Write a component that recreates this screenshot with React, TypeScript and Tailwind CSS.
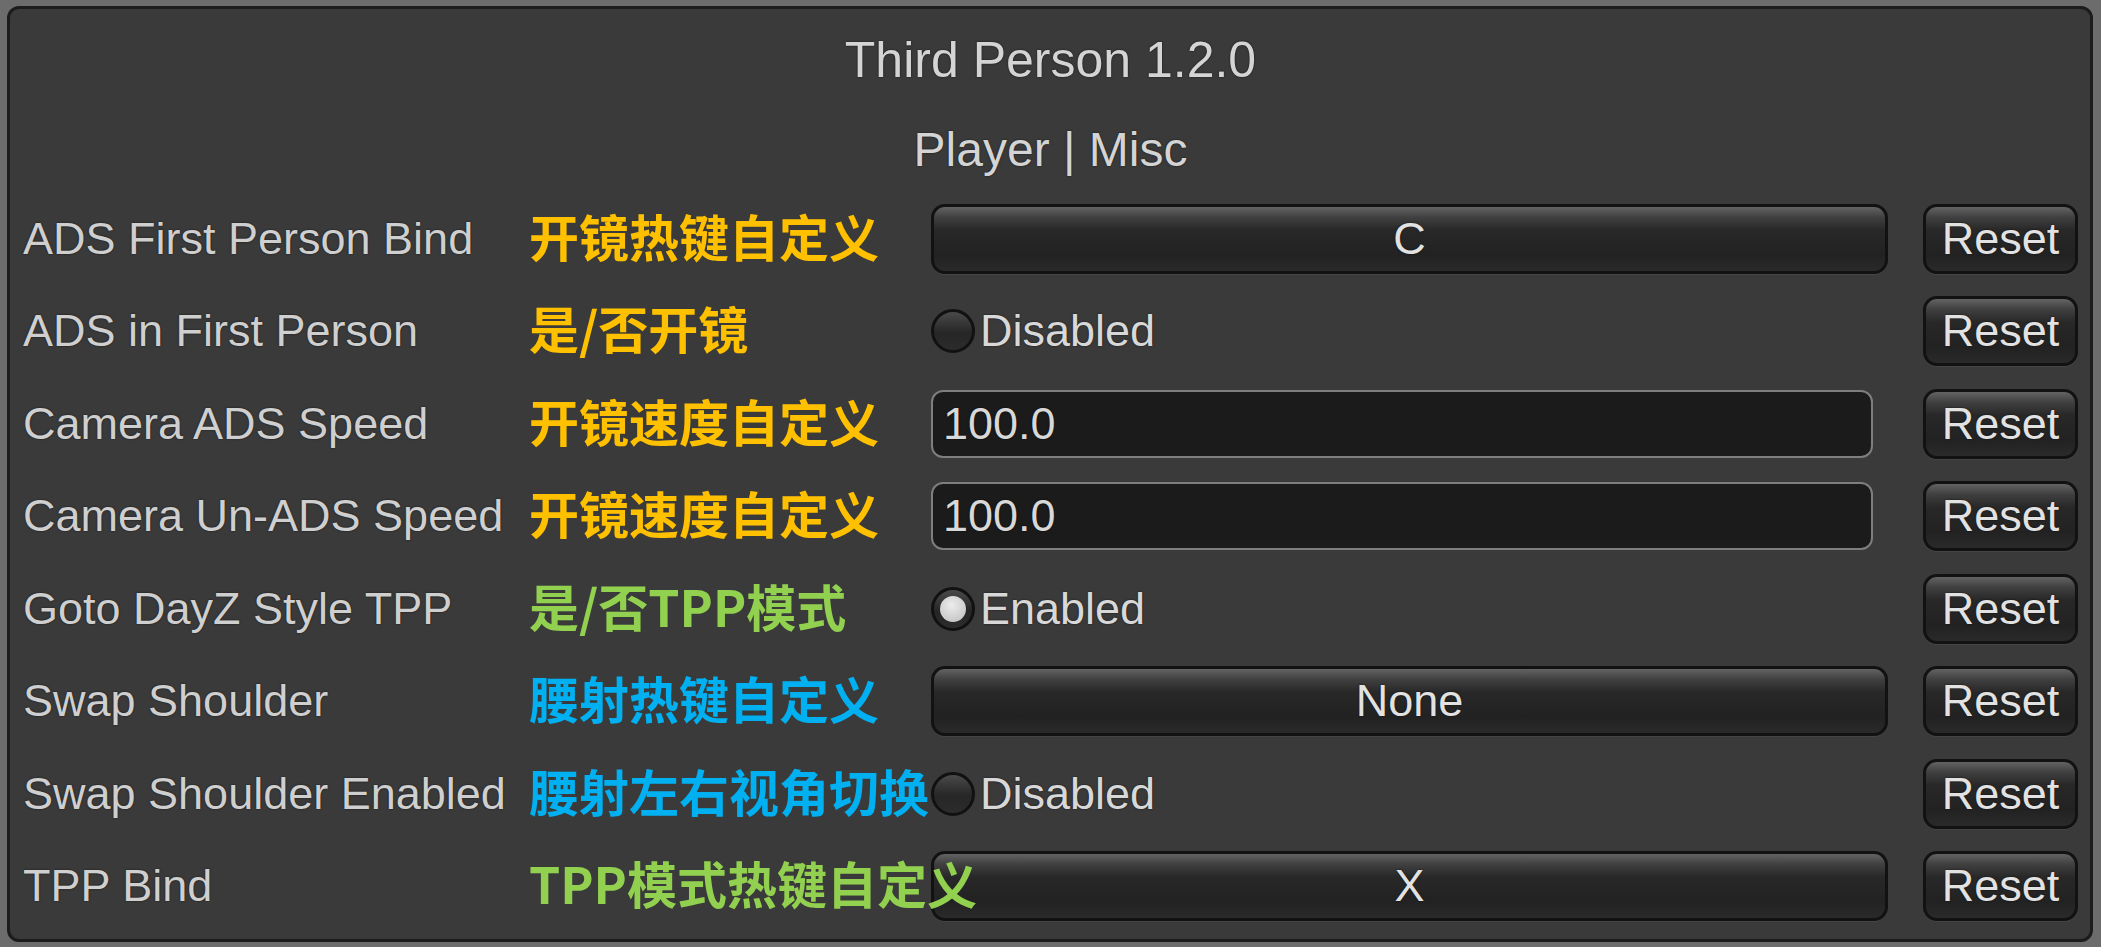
import React from 'react';

type Control =
  | { kind: 'bind'; value: string }
  | { kind: 'toggle'; on: boolean }
  | { kind: 'field'; value: string };

interface Row {
  label: string;
  note: string;
  noteColor: string;
  control: Control;
}

const rows: Row[] = [
  { label: 'ADS First Person Bind', note: '开镜热键自定义', noteColor: 'text-[#ffc000]', control: { kind: 'bind', value: 'C' } },
  { label: 'ADS in First Person', note: '是/否开镜', noteColor: 'text-[#ffc000]', control: { kind: 'toggle', on: false } },
  { label: 'Camera ADS Speed', note: '开镜速度自定义', noteColor: 'text-[#ffc000]', control: { kind: 'field', value: '100.0' } },
  { label: 'Camera Un-ADS Speed', note: '开镜速度自定义', noteColor: 'text-[#ffc000]', control: { kind: 'field', value: '100.0' } },
  { label: 'Goto DayZ Style TPP', note: '是/否TPP模式', noteColor: 'text-[#92d050]', control: { kind: 'toggle', on: true } },
  { label: 'Swap Shoulder', note: '腰射热键自定义', noteColor: 'text-[#00b0f0]', control: { kind: 'bind', value: 'None' } },
  { label: 'Swap Shoulder Enabled', note: '腰射左右视角切换', noteColor: 'text-[#00b0f0]', control: { kind: 'toggle', on: false } },
  { label: 'TPP Bind', note: 'TPP模式热键自定义', noteColor: 'text-[#92d050]', control: { kind: 'bind', value: 'X' } },
];

const btnSkin =
  'border-[3px] border-[#121212] bg-[linear-gradient(to_bottom,#636363_0%,#404040_16%,#282828_36%,#222222_75%,#2a2a2a_100%)] shadow-[0_1px_0_rgba(255,255,255,0.06)]';

const txt = '[text-shadow:0_0_2px_rgba(0,0,0,0.7)]';

const ControlCell: React.FC<{ control: Control }> = ({ control }) => {
  if (control.kind === 'bind') {
    return (
      <div className={`w-[957px] h-[70px] rounded-[14px] flex items-center justify-center text-[#e2e2e2] ${btnSkin} ${txt}`}>
        {control.value}
      </div>
    );
  }
  if (control.kind === 'field') {
    return (
      <div className={`w-[942px] h-[68px] rounded-[12px] border-2 border-[#7e7e7e] bg-[#1b1b1b] flex items-center pl-[10px] text-[#d8d8d8] ${txt}`}>
        {control.value}
      </div>
    );
  }
  return (
    <div className="flex items-center">
      <div className="w-[44px] h-[44px] rounded-full border-[3px] border-[#111111] bg-[linear-gradient(to_bottom,#4a4a4a,#262626_55%,#2c2c2c)] flex items-center justify-center">
        {control.on && <div className="w-[26px] h-[26px] rounded-full bg-[radial-gradient(circle_at_45%_35%,#ececec,#bcbcbc)]" />}
      </div>
      <span className={`ml-[5px] text-[#d8d8d8] ${txt}`}>{control.on ? 'Enabled' : 'Disabled'}</span>
    </div>
  );
};

const App: React.FC = () => {
  return (
    <div className="w-[2101px] h-[947px] bg-[#6c6c6c] pl-[7px] pt-[6px] pr-[8px] pb-[5px] overflow-hidden font-['Liberation_Sans',Arial,sans-serif]">
      <div className="h-full rounded-[12px] border-[3px] border-[#1c1c1c] bg-[#3a3a3a] pl-[13px] pr-[12px]">
        <div className={`mt-[21px] h-[60px] leading-[60px] text-center text-[50px] text-[#d4d4d4] ${txt}`}>Third Person 1.2.0</div>
        <div className={`mt-[30px] h-[60px] leading-[60px] text-center text-[48px] text-[#d4d4d4] ${txt}`}>Player | Misc</div>
        <div className="mt-[12.25px] flex flex-col text-[45px]">
          {rows.map((r) => (
            <div key={r.label} className="h-[92.5px] flex items-center">
              <div className={`w-[506px] whitespace-nowrap text-[#cfcfcf] ${txt}`}>{r.label}</div>
              <div
                className={`relative z-10 w-[402px] pb-[8px] whitespace-nowrap font-bold text-[50px] leading-none font-['Noto_Sans_CJK_SC',sans-serif] ${r.noteColor}`}
              >
                {r.note}
              </div>
              <div className="w-[957px] flex items-center">
                <ControlCell control={r.control} />
              </div>
              <div className={`ml-[35px] w-[155px] h-[70px] rounded-[14px] flex items-center justify-center text-[#e2e2e2] ${btnSkin} ${txt}`}>
                Reset
              </div>
            </div>
          ))}
        </div>
      </div>
    </div>
  );
};

export default App;
